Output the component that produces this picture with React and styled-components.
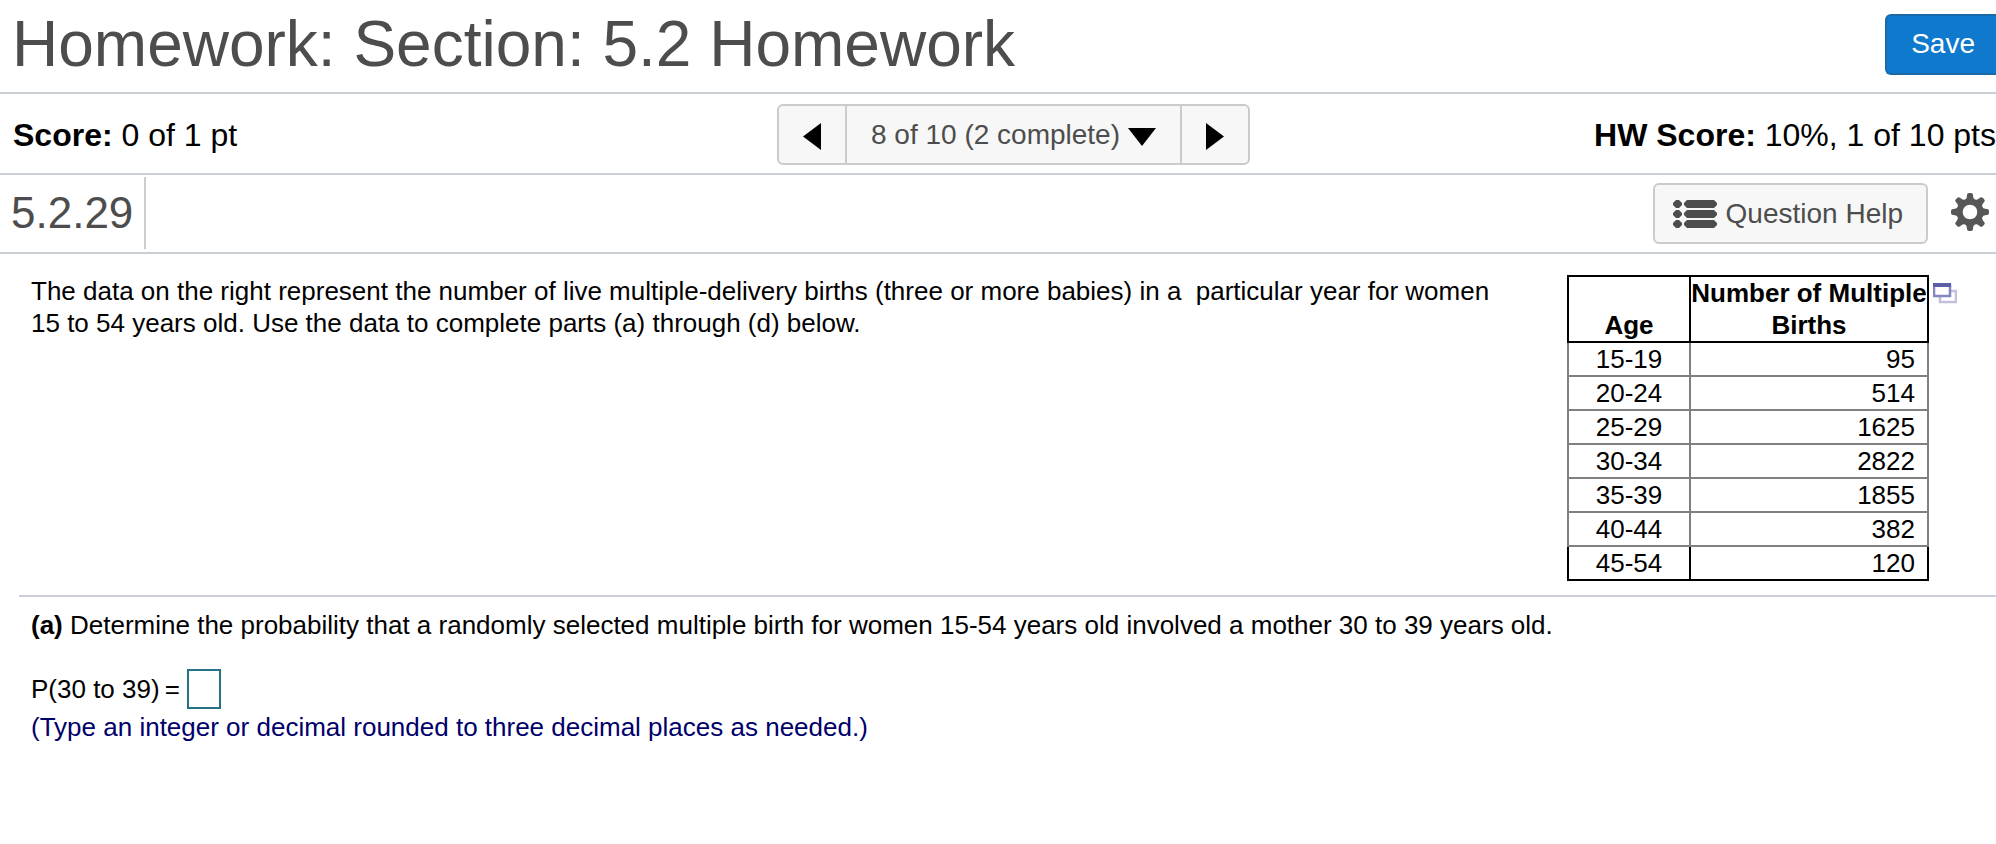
import React from 'react';
import styled, { createGlobalStyle } from 'styled-components';

const line = '#c9ced5';
const controlLine = '#cbcbcb';
const controlFill = '#f7f7f7';
const inkSoft = '#4d4d4d';

const GlobalStyle = createGlobalStyle`
  *, *::before, *::after { box-sizing: border-box; }
  body {
    margin: 0;
    background: #fff;
    color: #000;
    font-family: "Liberation Sans", Arial, Helvetica, sans-serif;
    font-size: 26px;
    line-height: 32px;
  }
  button, select, input { font: inherit; color: inherit; margin: 0; }
  button { cursor: pointer; }
`;

const Bar = styled.div`
  display: flex;
  align-items: center;
  justify-content: space-between;
  border-bottom: 2px solid ${line};
`;

const TitleBar = styled(Bar)`
  padding: 8px 0 12px 12px;
`;

const Title = styled.h1`
  margin: 0;
  font-size: 64px;
  line-height: 72px;
  font-weight: 400;
  color: ${inkSoft};
`;

const SaveButton = styled.button`
  height: 61px;
  padding: 0 21px 0 24px;
  border: 2px solid #1a69a8;
  border-right: 0;
  border-radius: 6px 0 0 6px;
  background: #0f7acd;
  color: #fff;
  font-size: 28px;
`;

const ScoreBar = styled(Bar)`
  display: grid;
  grid-template-columns: 1fr auto 1fr;
  padding: 10px 0 8px 13px;
`;

const Score = styled.div`
  font-size: 32px;
  white-space: nowrap;
  text-align: ${(p) => p.$align || 'left'};
`;

const Pager = styled.nav`
  display: flex;
  height: 61px;
  margin-left: 18px;
  border: 2px solid ${controlLine};
  border-radius: 6px;
  background: ${controlFill};
  overflow: hidden;
`;

const PagerButton = styled.button`
  display: flex;
  align-items: center;
  justify-content: center;
  width: 66px;
  padding: 4px 0 0;
  border: 0;
  background: transparent;
`;

const PagerChoice = styled.div`
  position: relative;
  display: flex;
  align-items: center;
  border: solid ${controlLine};
  border-width: 0 2px;

  svg {
    position: absolute;
    right: 24px;
    top: 22px;
    pointer-events: none;
  }
`;

const PagerSelect = styled.select`
  appearance: none;
  height: 100%;
  padding: 0 59px 0 24px;
  border: 0;
  background: transparent;
  color: ${inkSoft};
  font-size: 28px;
`;

const QuestionBar = styled(Bar)`
  align-items: stretch;
  padding-right: 6px;
`;

const QuestionNumber = styled.h2`
  display: flex;
  align-items: center;
  margin: 2px 0 3px;
  padding: 0 11px;
  border-right: 2px solid ${line};
  color: ${inkSoft};
  font-size: 44px;
  font-weight: 400;
`;

const Tools = styled.div`
  display: flex;
  align-items: flex-start;
  gap: 22px;
  padding: 8px 0;
`;

const HelpButton = styled.button`
  display: flex;
  align-items: center;
  gap: 8px;
  height: 61px;
  padding: 0 23px 0 18px;
  border: 2px solid ${controlLine};
  border-radius: 6px;
  background: ${controlFill};
  color: ${inkSoft};
  font-size: 28px;
`;

const IconButton = styled.button`
  display: flex;
  margin-top: 8px;
  padding: 0;
  border: 0;
  background: transparent;
`;

const Problem = styled.section`
  display: flex;
  align-items: flex-start;
  justify-content: space-between;
  gap: 60px;
  margin-left: 19px;
  padding: 21px 39px 14px 12px;
  border-bottom: 2px solid #cccfd6;
`;

const Prompt = styled.p`
  margin: 0;
`;

const DataArea = styled.div`
  display: flex;
  flex: none;
  align-items: flex-start;
  gap: 4px;
`;

const DataTable = styled.table`
  border-collapse: collapse;
  table-layout: fixed;
  width: 362px;
`;

const HeadCell = styled.th`
  width: ${(p) => p.$width};
  padding: 0;
  border: 2px solid #000;
  vertical-align: bottom;
`;

const Cell = styled.td`
  padding: ${(p) => (p.$numeric ? '0 12px 0 0' : '0')};
  border: 2px solid #808080;
  text-align: ${(p) => (p.$numeric ? 'right' : 'center')};

  tr:last-child > & {
    border-color: #808080 #000 #000;
  }
`;

const Part = styled.section`
  padding: 12px 31px;
`;

const AnswerRow = styled.div`
  display: flex;
  align-items: center;
  gap: 7px;
  margin: 28px 0 2px;
`;

const AnswerInput = styled.input`
  width: 34px;
  height: 40px;
  padding: 0 4px;
  border: 2px solid #267386;
  border-radius: 0;
  background: #fff;
`;

const Hint = styled.p`
  margin: 0;
  color: #00006b;
`;

const ListIcon = () => (
  <svg width="45" height="30" viewBox="0 0 45 30" fill="#4d4d4d" aria-hidden="true">
    {[1, 11, 21].map((y) => (
      <g key={y}>
        <path d={`M3 ${y}h3l3 3v2l-3 3h-3l-3-3v-2z`} />
        <path d={`M14 ${y}h27l3 3v2l-3 3h-27l-3-3v-2z`} />
      </g>
    ))}
  </svg>
);

const GearIcon = () => (
  <svg width="40" height="42" viewBox="-20 -21 40 42" aria-hidden="true">
    <g fill="#575757">
      {[0, 45, 90, 135, 180, 225, 270, 315].map((a) => (
        <path key={a} transform={`rotate(${a})`} d="M-6 -11Q-3 -13 -3 -17Q-3 -19 -1 -19H1Q3 -19 3 -17Q3 -13 6 -11Z" />
      ))}
      <circle r="13.5" />
    </g>
    <circle r="7.3" fill="#fff" />
  </svg>
);

const PopupIcon = () => (
  <svg width="24" height="21" viewBox="0 0 24 21" aria-hidden="true">
    <path d="M7 8h16v11H7z" fill="#fff" stroke="#c1c1df" strokeWidth="2.5" />
    <path d="M1 2h16v11H1z" fill="#fff" stroke="#8587bf" strokeWidth="2.5" />
    <path d="M0 0h18v4H0z" fill="#5a5fa8" />
  </svg>
);

const births = [
  ['15-19', 95],
  ['20-24', 514],
  ['25-29', 1625],
  ['30-34', 2822],
  ['35-39', 1855],
  ['40-44', 382],
  ['45-54', 120],
];

export default function App() {
  return (
    <>
      <GlobalStyle />
      <header>
        <TitleBar>
          <Title>Homework: Section: 5.2 Homework</Title>
          <SaveButton type="button">Save</SaveButton>
        </TitleBar>
        <ScoreBar>
          <Score><b>Score:</b> 0 of 1 pt</Score>
          <Pager aria-label="Questions">
            <PagerButton type="button" aria-label="Previous question">
              <svg width="18" height="27" viewBox="0 0 18 27"><path d="M18 0v27L0 13.5z" /></svg>
            </PagerButton>
            <PagerChoice>
              <PagerSelect aria-label="Choose question" defaultValue="8">
                <option value="8">8 of 10 (2 complete)</option>
              </PagerSelect>
              <svg width="28" height="18" viewBox="0 0 28 18"><path d="M0 0h28L14 18z" /></svg>
            </PagerChoice>
            <PagerButton type="button" aria-label="Next question">
              <svg width="18" height="27" viewBox="0 0 18 27"><path d="M0 0v27L18 13.5z" /></svg>
            </PagerButton>
          </Pager>
          <Score $align="right"><b>HW Score:</b> 10%, 1 of 10 pts</Score>
        </ScoreBar>
        <QuestionBar>
          <QuestionNumber>5.2.29</QuestionNumber>
          <Tools>
            <HelpButton type="button"><ListIcon />Question Help</HelpButton>
            <IconButton type="button" aria-label="Settings"><GearIcon /></IconButton>
          </Tools>
        </QuestionBar>
      </header>
      <main>
        <Problem>
          <Prompt>
            The data on the right represent the number of live multiple-delivery births (three or more
            babies) in a&nbsp; particular year for women 15 to 54 years old. Use the data to complete
            parts (a) through (d) below.
          </Prompt>
          <DataArea>
            <DataTable>
              <thead>
                <tr>
                  <HeadCell scope="col" $width="122px">Age</HeadCell>
                  <HeadCell scope="col">Number of Multiple Births</HeadCell>
                </tr>
              </thead>
              <tbody>
                {births.map(([age, count]) => (
                  <tr key={age}>
                    <Cell>{age}</Cell>
                    <Cell $numeric>{count}</Cell>
                  </tr>
                ))}
              </tbody>
            </DataTable>
            <IconButton type="button" aria-label="Open data in a new window"><PopupIcon /></IconButton>
          </DataArea>
        </Problem>
        <Part>
          <Prompt>
            <b>(a)</b> Determine the probability that a randomly selected multiple birth for women 15-54
            years old involved a mother 30 to 39 years old.
          </Prompt>
          <AnswerRow>
            <label htmlFor="answer">P(30 to 39)&thinsp;=</label>
            <AnswerInput id="answer" type="text" aria-describedby="answer-hint" />
          </AnswerRow>
          <Hint id="answer-hint">(Type an integer or decimal rounded to three decimal places as needed.)</Hint>
        </Part>
      </main>
    </>
  );
}
